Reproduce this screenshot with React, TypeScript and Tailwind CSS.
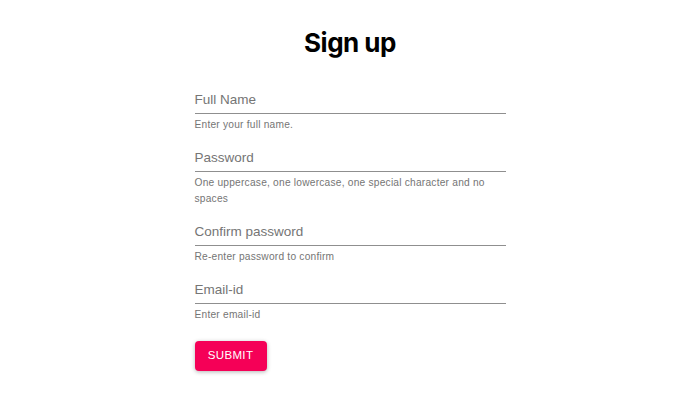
const fields = [
  { label: 'Full Name', help: 'Enter your full name.' },
  { label: 'Password', help: 'One uppercase, one lowercase, one special character and no spaces' },
  { label: 'Confirm password', help: 'Re-enter password to confirm' },
  { label: 'Email-id', help: 'Enter email-id' },
];

export default function App() {
  return (
    <div className="min-h-screen bg-white font-['Liberation_Sans',Arial,sans-serif]">
      <h1 className="pt-[26px] text-center font-['Inter',sans-serif] text-[26px] font-bold leading-[34px] tracking-[-0.02em] text-black">
        Sign up
      </h1>
      <form className="mx-auto mt-[28px] flex w-[311px] flex-col gap-[13px]" onSubmit={e => e.preventDefault()}>
        {fields.map(f => (
          <div key={f.label}>
            <div className="flex h-[26px] items-center border-b border-[#8f8f8f] text-[13.5px] text-[#757575]">
              {f.label}
            </div>
            <p className="mt-[3px] text-[10.2px] leading-[16px] tracking-[0.22px] text-[#757575]">{f.help}</p>
          </div>
        ))}
        <div className="pt-[5px]">
          <button
            type="submit"
            className="h-[30px] w-[72px] rounded-[4px] bg-[#f50057] text-[11.5px] tracking-[0.35px] text-white shadow-[0_1px_4px_rgba(0,0,0,0.3)]"
          >
            SUBMIT
          </button>
        </div>
      </form>
    </div>
  );
}
